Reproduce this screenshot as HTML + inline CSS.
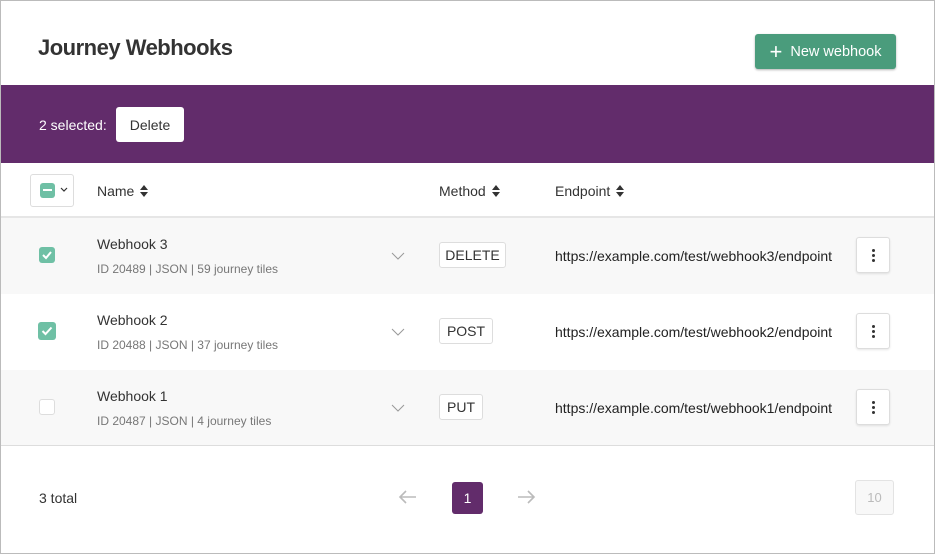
<!DOCTYPE html><html><head><style>
*{box-sizing:border-box;margin:0;padding:0}
body{width:935px;height:554px;overflow:hidden;font-family:"Liberation Sans",sans-serif;color:#333;background:#fff}
.frame{position:absolute;left:0;top:0;width:935px;height:554px;border:1px solid #bbb}
.abs{position:absolute}
h1{position:absolute;left:38px;top:35px;font-size:22px;font-weight:bold;color:#333;letter-spacing:-.5px}
.newbtn{left:755px;top:34px;width:141px;height:35px;background:#4a9c7c;border-radius:3px;color:#fff;font-size:14.5px;display:flex;align-items:center;justify-content:center;gap:8px;box-shadow:0 1px 2px rgba(0,0,0,.3)}
.band{left:1px;top:85px;width:933px;height:78px;background:#622c6b}
.sel{left:39px;top:117px;color:#fff;font-size:14px}
.del{left:116px;top:107px;width:68px;height:35px;background:#fff;border-radius:3px;font-size:14px;display:flex;align-items:center;justify-content:center;color:#333}
.th{font-size:14px;color:#333;top:183px}
.th svg{vertical-align:-1px;margin-left:6px}
.row{left:1px;width:933px;height:76px}
.cb{width:16px;height:16px;border-radius:3px;left:39px}
.on{background:#6fc0a5}
.off{border:1px solid #ddd;background:#fff}
.name{left:97px;font-size:14px;color:#333}
.meta{left:97px;font-size:12px;color:#777}
.pill{height:26px;border:1px solid #ddd;border-radius:3px;background:#fff;font-size:14px;display:flex;align-items:center;justify-content:center;left:439px}
.url{left:555px;font-size:14px;color:#222}
.kb{left:856px;width:34px;height:36px;border:1px solid #ddd;border-radius:3px;background:#fff;box-shadow:0 1px 2px rgba(0,0,0,.1)}
.kb i{position:absolute;left:15px;width:3px;height:3px;border-radius:50%;background:#333}
</style></head><body>
<div class="frame"></div>
<h1>Journey Webhooks</h1>
<div class="abs newbtn"><span style="font-size:22px;font-weight:300;line-height:1">+</span>New webhook</div>
<div class="abs band"></div>
<div class="abs sel">2 selected:</div>
<div class="abs del">Delete</div>
<div class="abs" style="left:30px;top:174px;width:44px;height:33px;border:1px solid #ddd;border-radius:3px"></div>
<div class="abs on" style="left:40px;top:183px;width:15px;height:15px;border-radius:3px"><div style="position:absolute;left:3px;top:6px;width:9px;height:2px;background:#fff"></div></div>
<svg class="abs" style="left:60px;top:187px" width="8" height="6"><path d="M1 1l3 3 3-3" stroke="#333" fill="none" stroke-width="1.2"/></svg>
<div class="abs th" style="left:97px">Name<svg width="8" height="12"><path d="M4 0L8 5H0z M4 12L0 7h8z" fill="#333"/></svg></div>
<div class="abs th" style="left:439px">Method<svg width="8" height="12"><path d="M4 0L8 5H0z M4 12L0 7h8z" fill="#333"/></svg></div>
<div class="abs th" style="left:555px">Endpoint<svg width="8" height="12"><path d="M4 0L8 5H0z M4 12L0 7h8z" fill="#333"/></svg></div>
<div class="abs" style="left:1px;top:216px;width:933px;height:2px;background:#e6e6e6"></div>

<div class="abs row" style="top:218px;background:#f8f8f8"></div>
<div class="abs row" style="top:370px;background:#f8f8f8"></div>
<div class="abs" style="left:1px;top:445px;width:933px;height:1px;background:#ddd"></div>

<div class="abs cb on" style="top:247px"><svg width="16" height="16"><path d="M4 8l3 3 5-6" stroke="#fff" stroke-width="2" fill="none"/></svg></div>
<div class="abs cb on" style="top:322px;width:18px;height:18px;left:38px"><svg width="18" height="18"><path d="M4.5 9l3 3 6-6.5" stroke="#fff" stroke-width="2" fill="none"/></svg></div>
<div class="abs cb off" style="top:399px"></div>

<div class="abs name" style="top:236px">Webhook 3</div>
<div class="abs meta" style="top:262px">ID 20489 | JSON | 59 journey tiles</div>
<div class="abs name" style="top:312px">Webhook 2</div>
<div class="abs meta" style="top:338px">ID 20488 | JSON | 37 journey tiles</div>
<div class="abs name" style="top:388px">Webhook 1</div>
<div class="abs meta" style="top:414px">ID 20487 | JSON | 4 journey tiles</div>

<svg class="abs" style="left:391px;top:252px" width="14" height="8"><path d="M1 1l6 6 6-6" stroke="#999" fill="none"/></svg>
<svg class="abs" style="left:391px;top:328px" width="14" height="8"><path d="M1 1l6 6 6-6" stroke="#999" fill="none"/></svg>
<svg class="abs" style="left:391px;top:404px" width="14" height="8"><path d="M1 1l6 6 6-6" stroke="#999" fill="none"/></svg>

<div class="abs pill" style="top:242px;width:67px">DELETE</div>
<div class="abs pill" style="top:318px;width:54px">POST</div>
<div class="abs pill" style="top:394px;width:44px">PUT</div>

<div class="abs url" style="top:248px">https://example.com/test/webhook3/endpoint</div>
<div class="abs url" style="top:324px">https://example.com/test/webhook2/endpoint</div>
<div class="abs url" style="top:400px">https://example.com/test/webhook1/endpoint</div>

<div class="abs kb" style="top:237px"><i style="top:11px"></i><i style="top:16px"></i><i style="top:21px"></i></div>
<div class="abs kb" style="top:313px"><i style="top:11px"></i><i style="top:16px"></i><i style="top:21px"></i></div>
<div class="abs kb" style="top:389px"><i style="top:11px"></i><i style="top:16px"></i><i style="top:21px"></i></div>

<div class="abs" style="left:39px;top:490px;font-size:14px">3 total</div>
<svg class="abs" style="left:398px;top:490px" width="20" height="14"><path d="M18 7H2M8 1L2 7l6 6" stroke="#bbb" stroke-width="1.6" fill="none"/></svg>
<div class="abs" style="left:452px;top:482px;width:31px;height:32px;background:#622c6b;border-radius:3px;color:#fff;font-size:14px;display:flex;align-items:center;justify-content:center">1</div>
<svg class="abs" style="left:516px;top:490px" width="20" height="14"><path d="M2 7h16M12 1l6 6-6 6" stroke="#bbb" stroke-width="1.6" fill="none"/></svg>
<div class="abs" style="left:855px;top:480px;width:39px;height:35px;border:1px solid #e3e3e3;background:#f8f8f8;border-radius:3px;color:#bbb;font-size:13px;display:flex;align-items:center;justify-content:center">10</div>
</body></html>
